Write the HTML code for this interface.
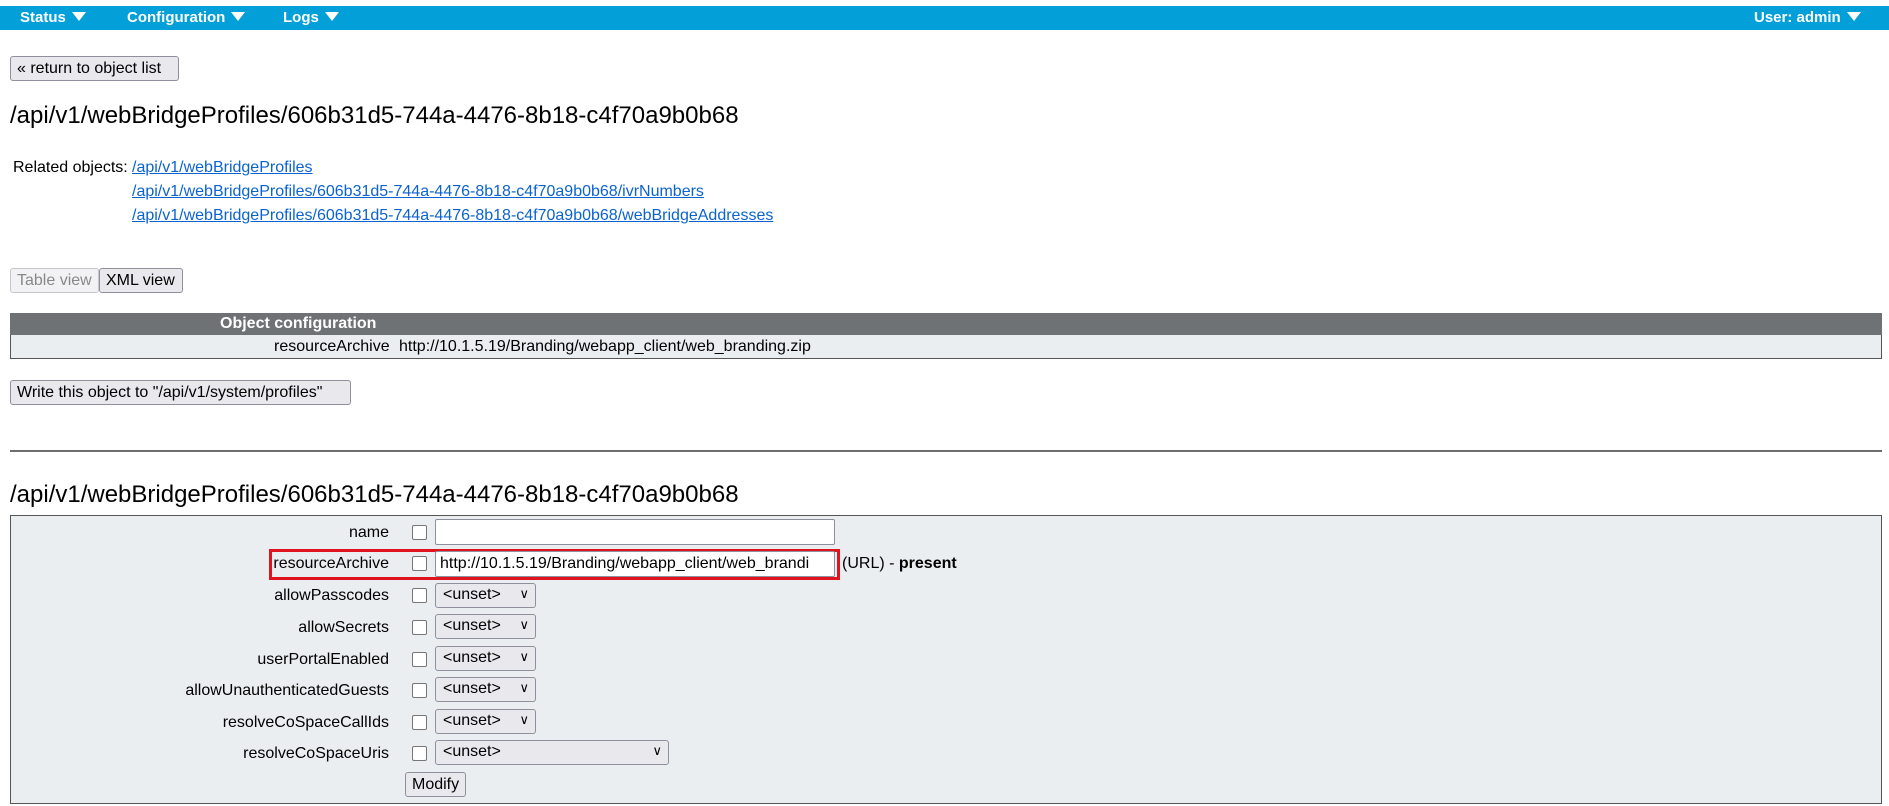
<!DOCTYPE html>
<html><head><style>
body{margin:0;width:1889px;height:806px;position:relative;background:#fff;font-family:"Liberation Sans",Tahoma,sans-serif;font-size:16px;color:#000;overflow:hidden}
.a{position:absolute;white-space:nowrap}
.nav{position:absolute;left:0;top:6px;width:1889px;height:24px;background:#039fd9}
.nav span{position:absolute;top:3px;color:#fff;font-weight:bold;font-size:15px}
.tri{display:inline-block;width:0;height:0;border-left:7px solid transparent;border-right:7px solid transparent;border-top:9px solid #fff;margin-left:6px;vertical-align:1px}
.btn{position:absolute;background:#e9e9ed;border:1px solid #8f8f9d;border-radius:3px;font-size:16px;line-height:23px;padding:0 6px;box-sizing:border-box;white-space:nowrap}
a{color:#0b63d0;text-decoration:underline}
h1{position:absolute;margin:0;font-weight:normal;font-size:24px;left:10px;white-space:nowrap}
.lbl{position:absolute;right:1500px;text-align:right;white-space:nowrap}
.cb{position:absolute;left:412px;width:13px;height:13px;border:1px solid #767676;border-radius:2px;background:#fff}
.sel{position:absolute;left:435px;height:25px;border:1px solid #8f8f9d;border-radius:3px;background:#e9e9ed;box-sizing:border-box;padding:2px 7px}
.sel i{position:absolute;right:6px;top:2px;font-style:normal;font-size:13px}
</style></head><body>
<div class="nav">
<span style="left:20px">Status<i class="tri"></i></span>
<span style="left:127px">Configuration<i class="tri"></i></span>
<span style="left:283px">Logs<i class="tri"></i></span>
<span style="left:1754px">User: admin<i class="tri"></i></span>
</div>
<div class="btn" style="left:10px;top:56px;width:169px;height:25px">« return to object list</div>
<h1 style="top:102px">/api/v1/webBridgeProfiles/606b31d5-744a-4476-8b18-c4f70a9b0b68</h1>
<div class="a" style="left:13px;top:159px">Related objects:</div>
<div class="a" style="left:132px;top:159px"><a>/api/v1/webBridgeProfiles</a></div>
<div class="a" style="left:132px;top:183px"><a>/api/v1/webBridgeProfiles/606b31d5-744a-4476-8b18-c4f70a9b0b68/ivrNumbers</a></div>
<div class="a" style="left:132px;top:207px"><a>/api/v1/webBridgeProfiles/606b31d5-744a-4476-8b18-c4f70a9b0b68/webBridgeAddresses</a></div>
<div class="btn" style="left:10px;top:268px;width:89px;height:25px;color:#888;background:#f2f2f4;border-color:#c5c5cc">Table view</div>
<div class="btn" style="left:99px;top:268px;width:84px;height:25px">XML view</div>
<div class="a" style="left:10px;top:313px;width:1870px;height:44px;border:1px solid #555;background:#ebeef0"></div>
<div class="a" style="left:10px;top:313px;width:1872px;height:22px;background:#6e7275"></div>
<div class="a" style="left:220px;top:315px;color:#fff;font-weight:bold">Object configuration</div>
<div class="a" style="left:274px;top:338px">resourceArchive</div>
<div class="a" style="left:399px;top:338px">http://10.1.5.19/Branding/webapp_client/web_branding.zip</div>
<div class="btn" style="left:10px;top:380px;width:341px;height:25px">Write this object to "/api/v1/system/profiles"</div>
<div class="a" style="left:10px;top:450px;width:1872px;height:2px;background:#6e6e6e"></div>
<h1 style="top:481px">/api/v1/webBridgeProfiles/606b31d5-744a-4476-8b18-c4f70a9b0b68</h1>
<div class="a" style="left:10px;top:515px;width:1870px;height:287px;border:1px solid #555;background:#ebeef0"></div>
<div class="lbl" style="top:524px">name</div><div class="cb" style="top:525px"></div>
<div class="a" style="left:435px;top:519px;width:400px;height:26px;border:1px solid #8f8f9d;border-radius:2px;background:#fff;box-sizing:border-box"></div>
<div class="a" style="left:269px;top:549px;width:571px;height:31px;border:3px solid #e0141e;box-sizing:border-box"></div>
<div class="lbl" style="top:555px">resourceArchive</div><div class="cb" style="top:556px"></div>
<div class="a" style="left:435px;top:551px;width:400px;height:26px;border:1px solid #8f8f9d;border-radius:2px;background:#fff;box-sizing:border-box;padding:3px 4px;overflow:hidden">http://10.1.5.19/Branding/webapp_client/web_brandi</div>
<div class="a" style="left:842px;top:555px">(URL) - <b>present</b></div>
<div class="lbl" style="top:587px">allowPasscodes</div><div class="cb" style="top:588px"></div><div class="sel" style="top:583px;width:101px">&lt;unset&gt;<i>&#8744;</i></div>
<div class="lbl" style="top:619px">allowSecrets</div><div class="cb" style="top:620px"></div><div class="sel" style="top:614px;width:101px">&lt;unset&gt;<i>&#8744;</i></div>
<div class="lbl" style="top:651px">userPortalEnabled</div><div class="cb" style="top:652px"></div><div class="sel" style="top:646px;width:101px">&lt;unset&gt;<i>&#8744;</i></div>
<div class="lbl" style="top:682px">allowUnauthenticatedGuests</div><div class="cb" style="top:683px"></div><div class="sel" style="top:677px;width:101px">&lt;unset&gt;<i>&#8744;</i></div>
<div class="lbl" style="top:714px">resolveCoSpaceCallIds</div><div class="cb" style="top:715px"></div><div class="sel" style="top:709px;width:101px">&lt;unset&gt;<i>&#8744;</i></div>
<div class="lbl" style="top:745px">resolveCoSpaceUris</div><div class="cb" style="top:746px"></div><div class="sel" style="top:740px;width:234px">&lt;unset&gt;<i>&#8744;</i></div>
<div class="btn" style="left:405px;top:772px;width:61px;height:25px">Modify</div>
</body></html>
